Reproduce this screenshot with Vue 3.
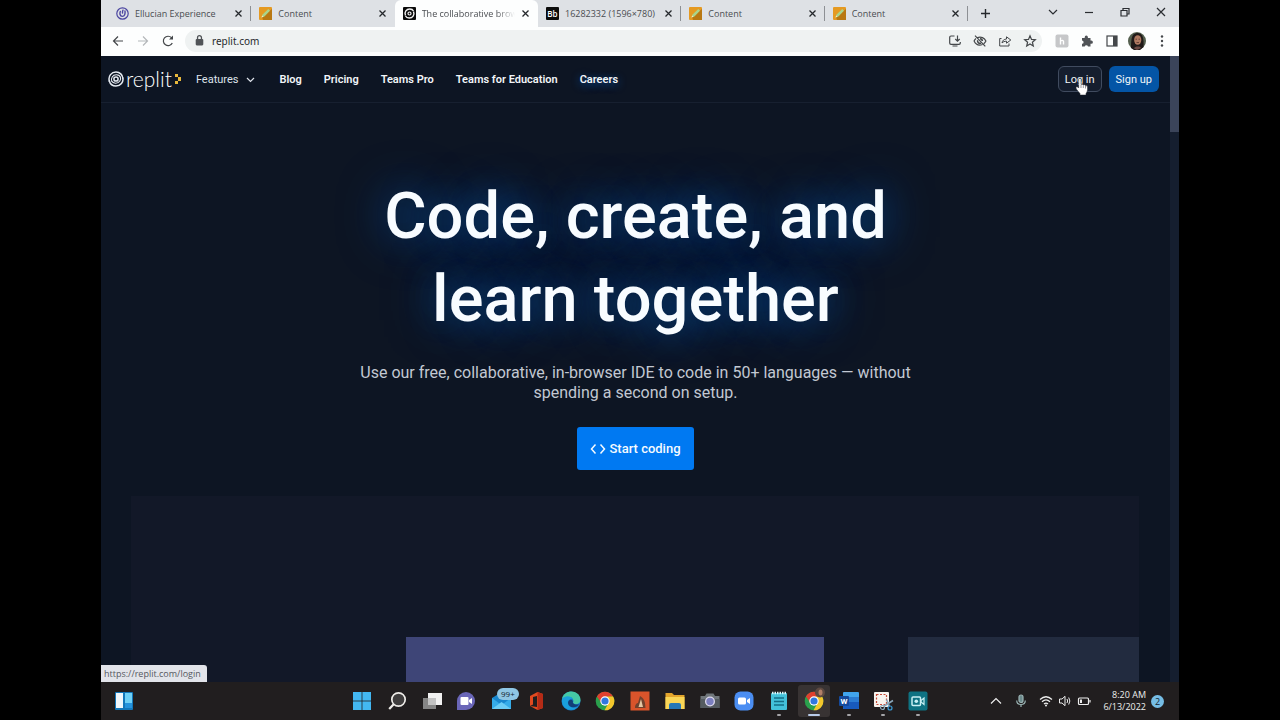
<script setup>
import { ref } from 'vue'

const address = ref('replit.com')

const tabs = [
  { title: 'Ellucian Experience', icon: 'ellucian' },
  { title: 'Content', icon: 'pencil' },
  { title: 'The collaborative brow', icon: 'replit', active: true },
  { title: '16282332 (1596×780)', icon: 'bb' },
  { title: 'Content', icon: 'pencil' },
  { title: 'Content', icon: 'pencil' },
]

const links = [
  { label: 'Blog' },
  { label: 'Pricing' },
  { label: 'Teams Pro' },
  { label: 'Teams for Education' },
  { label: 'Careers', glow: true },
]

const apps = [
  { name: 'Start' }, { name: 'Search' }, { name: 'Task view' }, { name: 'Chat' },
  { name: 'Mail', badge: '99+' }, { name: 'Office' }, { name: 'Edge' }, { name: 'Chrome' },
  { name: 'Paint' }, { name: 'File Explorer' }, { name: 'Camera' }, { name: 'Zoom' },
  { name: 'Notepad', open: true }, { name: 'Chrome window', open: true, active: true },
  { name: 'Word', open: true }, { name: 'Snipping Tool', open: true }, { name: 'Recorder', open: true },
]
</script>

<template>
  <div class="stage">
    <div class="desktop">
      <header class="tabstrip">
        <div class="tabs" role="tablist">
          <div v-for="(tab, i) in tabs" :key="i" class="tab" :class="{ active: tab.active, quiet: i === 1 || tab.active }" role="tab" :aria-selected="!!tab.active">
            <span v-if="tab.icon === 'bb'" class="favicon bb">Bb</span>
            <svg v-else class="favicon" viewBox="0 0 13 13" aria-hidden="true">
              <g v-if="tab.icon === 'ellucian'" fill="none" stroke="#4b45a0" stroke-linecap="round">
                <circle cx="6.500" cy="6.500" r="5.700" stroke-width="1.200" />
                <path d="M4.300 4.500C3.600 6 3.700 9.400 6.300 9.400C8.700 9.400 9.400 6.600 9 4M7 3.200C6.500 4 6.400 5 6.500 6" stroke-width="1.400" />
              </g>
              <g v-else-if="tab.icon === 'pencil'">
                <rect width="13" height="13" rx="1" fill="#e59a22" />
                <path d="M3 10L13 2V13H4Z" fill="#b97812" />
                <path d="M2.500 10.500L3.600 7.500L9.300 2L11 3.700L5.400 9.400Z" fill="#a9d48c" />
                <path d="M2.500 10.500L3.200 8.400L4.600 9.700Z" fill="#f5ecc8" />
              </g>
              <g v-else>
                <rect width="13" height="13" rx="1" fill="#0b0b0b" />
                <g fill="none" stroke="#f3f3f3">
                  <circle cx="6.500" cy="6.500" r="1.500" stroke-width="1.200" />
                  <path d="M2.500 8.500C1 5 3.500 2 6.800 2C8.500 2 10 3 10.500 4M10.500 4.500C12 8 9.500 11 6.200 11C4.500 11 3 10 2.500 9" stroke-width="1.400" />
                </g>
              </g>
            </svg>
            <span class="tab-title">{{ tab.title }}</span>
            <button class="close" aria-label="Close tab">
              <svg viewBox="0 0 9 9" width="9" height="9"><path d="M1.500 1.500L7.500 7.500M7.500 1.500L1.500 7.500" stroke="#25282c" stroke-width="1.300" /></svg>
            </button>
          </div>
        </div>
        <button class="new-tab" aria-label="New tab">
          <svg viewBox="0 0 11 11" width="11" height="11"><path d="M5.500 1V10M1 5.500H10" stroke="#25282c" stroke-width="1.400" /></svg>
        </button>
        <div class="window-controls">
          <button aria-label="Search tabs"><svg viewBox="0 0 12 12"><path d="M2 4L6 8L10 4" /></svg></button>
          <button aria-label="Minimize"><svg viewBox="0 0 12 12"><path d="M2 6.500H10" /></svg></button>
          <button aria-label="Restore"><svg viewBox="0 0 12 12"><path d="M2 4.500H8V10H2ZM4 4.500V2.500H10V8H8" /></svg></button>
          <button aria-label="Close"><svg viewBox="0 0 12 12"><path d="M2 2L10 10M10 2L2 10" /></svg></button>
        </div>
      </header>

      <div class="toolbar">
        <button class="tool" aria-label="Back"><svg viewBox="0 0 14 14"><path d="M12 7H2.500M7 2.500L2.500 7L7 11.500" /></svg></button>
        <button class="tool dim" aria-label="Forward"><svg viewBox="0 0 14 14"><path d="M2 7H11.500M7 2.500L11.500 7L7 11.500" /></svg></button>
        <button class="tool" aria-label="Reload"><svg viewBox="0 0 14 14"><path d="M11.300 9A4.700 4.700 0 1 1 10.500 3.700L11.500 4.800" /><path d="M12 1.500V5.500H8Z" fill="#44474a" stroke="none" /></svg></button>
        <div class="omnibox">
          <svg class="lock" viewBox="0 0 10 12"><rect x="1.500" y="4.500" width="7" height="6" rx="1" fill="#505357" /><path d="M3.200 5V3.300A1.800 1.800 0 0 1 6.800 3.300V5" fill="none" stroke="#505357" stroke-width="1.200" /></svg>
          <input v-model="address" type="text" aria-label="Address" class="address" />
          <button class="tool" aria-label="Install"><svg viewBox="0 0 14 14"><path d="M6.500 2H3Q1.700 2 1.700 3.300V9Q1.700 10.300 3 10.300H11Q12.300 10.300 12.300 9V8M4.500 12H9.500M9.500 1.500V7M7.300 5L9.500 7.200L11.700 5" /></svg></button>
          <button class="tool" aria-label="Third-party cookies blocked"><svg viewBox="0 0 14 14"><path d="M4.500 3.600C8 2.200 11.500 4 12.900 7C12.400 8.200 11.700 9 10.800 9.700M9.500 10.500C5.500 12 2.500 10 1.100 7C1.600 5.900 2.200 5.200 3 4.500M2 1.700L12.300 12.300" /><path d="M7 4.700A2.300 2.300 0 0 1 9.300 7M8 9A2.300 2.300 0 0 1 4.700 6.300" stroke-width="1.600" /></svg></button>
          <button class="tool" aria-label="Share"><svg viewBox="0 0 14 14"><path d="M3.500 4.500H1.700V12H11V9.500M4 9C4.300 6.500 6 5.200 8.500 5V2.800L12.800 6L8.500 9.200V7.200C6.500 7.200 5.200 7.700 4 9Z" stroke-width="1" /></svg></button>
          <button class="tool" aria-label="Bookmark"><svg viewBox="0 0 14 14"><path d="M7 1.800L8.500 5.400L12.300 5.700L9.400 8.200L10.300 12L7 10L3.700 12L4.600 8.200L1.700 5.700L5.500 5.400Z" /></svg></button>
        </div>
        <button class="tool" aria-label="Honey"><svg viewBox="0 0 14 14"><rect x="0.500" y="0.500" width="13" height="13" rx="2" fill="#c6c7c9" stroke="none" /><path d="M5.500 3.500V10.500M5.500 7Q8 5.500 8.500 7.500V10.500" stroke="#fff" stroke-width="1.400" /></svg></button>
        <button class="tool" aria-label="Extensions"><svg viewBox="0 0 14 14"><path d="M2 4H4.700V3.200A1.600 1.600 0 0 1 7.900 3.200V4H10.500V6.600H11.300A1.600 1.600 0 0 1 11.300 9.800H10.500V12.500H8A1.700 1.700 0 0 0 4.700 12.500H2V9.800A1.600 1.600 0 0 0 2 6.600Z" fill="#505357" stroke="none" /></svg></button>
        <button class="tool" aria-label="Side panel"><svg viewBox="0 0 14 14"><rect x="2" y="2" width="10" height="10" /><rect x="8" y="2" width="4" height="10" fill="#44474a" stroke="none" /></svg></button>
        <button class="tool" aria-label="Profile">
          <svg class="avatar" viewBox="0 0 18 18"><circle cx="9" cy="9" r="9" fill="#55604f" /><path d="M3 16C3 6 4 1 9.500 1S16 7 15.500 15L12 18H6Z" fill="#201a19" /><ellipse cx="9.700" cy="8" rx="3.600" ry="4.800" fill="#b07a62" /><path d="M6 16.500C7 14 12 14 13 16L9 18Z" fill="#6c4a45" /><path d="M7.500 7.200H9M10.500 7.200H12M8.500 10.500H11" stroke="#4a2a24" stroke-width="0.700" /></svg>
        </button>
        <button class="tool" aria-label="Menu"><svg viewBox="0 0 14 14"><g fill="#44474a" stroke="none"><circle cx="7" cy="2.500" r="1.200" /><circle cx="7" cy="7" r="1.200" /><circle cx="7" cy="11.500" r="1.200" /></g></svg></button>
      </div>

      <div class="viewport">
        <div class="page">
          <nav class="nav">
            <a href="#" class="logo" aria-label="replit">
              <svg viewBox="0 0 16 16" width="16" height="16" fill="none" stroke="#e6ebf2" stroke-linecap="round" aria-hidden="true">
                <circle cx="8" cy="8" r="2.100" stroke-width="1.500" />
                <path d="M1.300 10C0 5 3.500 1 8 1C12 1 14.500 4 14.800 7" stroke-width="1.500" />
                <path d="M14.800 7C15.800 11 12.500 15 8 15C4.500 15 2 12.500 1.300 10" stroke-width="1.500" />
                <path d="M3.800 10.500C2.600 7.500 4.500 3.700 8.500 3.800C10.500 3.900 12 5 12.500 6.500M12.200 5.500C13.500 8.500 11.500 12.300 7.500 12.200C5.500 12.100 4.200 11.200 3.700 10" stroke-width="1.100" />
              </svg>
              <span class="wordmark">replit</span>
              <svg viewBox="0 0 8 12" width="8" height="12" aria-hidden="true"><path d="M1 1H4V4H1ZM4 4H7V8H4ZM1 8H4V11H1Z" fill="#e9b93c" /></svg>
            </a>
            <button class="features">Features
              <svg viewBox="0 0 9 9" width="9" height="9"><path d="M1 3L4.500 6.500L8 3" fill="none" stroke="currentColor" stroke-width="1.200" /></svg>
            </button>
            <a v-for="link in links" :key="link.label" href="#" class="link" :class="{ glow: link.glow }">{{ link.label }}</a>
            <div class="account">
              <button class="btn login">Log in
                <svg class="cursor" viewBox="0 0 14 19" aria-hidden="true"><path d="M4 1.500Q5.500 0.500 6 2.300V7.500Q7.500 6.800 8.300 8Q9.800 7.300 10.500 8.700Q12.300 8.200 12.500 10V13Q12 15.500 11 16.500V18H5V16.500Q3.500 14.800 1.300 12Q0.500 10.300 1.700 9.800Q2.800 9.700 3.700 11V2.500Z" fill="#fff" stroke="#20242c" stroke-width="0.500" /><path d="M6 8V11M8.300 8.500V11M10.500 9V11.500" stroke="#4d525c" stroke-width="0.600" /></svg>
              </button>
              <button class="btn signup">Sign up</button>
            </div>
          </nav>

          <main class="hero">
            <h1>Code, create, and<br />learn together</h1>
            <p>Use our free, collaborative, in-browser IDE to code in 50+ languages — without spending a second on setup.</p>
            <button class="start">
              <svg viewBox="0 0 16 12" width="16" height="12"><path d="M5.500 1.500L1.500 6L5.500 10.500M10.500 1.500L14.500 6L10.500 10.500" fill="none" stroke="currentColor" stroke-width="1.500" /></svg>
              Start coding
            </button>
          </main>

          <section class="preview" aria-label="Preview">
            <div class="purple"></div>
            <div class="slate"></div>
          </section>
        </div>
        <div class="scrollbar"><div class="thumb"></div></div>
        <div class="status">https://replit.com/login</div>
      </div>

      <footer class="taskbar">
        <div class="widgets">
          <button class="app" aria-label="Widgets"><svg viewBox="0 0 20 20"><rect x="1" y="1" width="18" height="18" rx="1" fill="#1377b9" /><rect x="2" y="2" width="7" height="15" fill="#f1f8fc" /><rect x="11" y="2" width="7" height="10" fill="#6fd0f5" /><rect x="11" y="12" width="7" height="5" fill="#2593dc" /></svg></button>
        </div>
        <div class="apps">
          <button v-for="(app, i) in apps" :key="app.name" class="app" :class="{ open: app.open, active: app.active }" :aria-label="app.name">
            <svg viewBox="0 0 20 20">
              <g v-if="i === 0" fill="#43b8f2"><rect x="1" y="1" width="8.600" height="8.600" /><rect x="10.400" y="1" width="8.600" height="8.600" /><rect x="1" y="10.400" width="8.600" height="8.600" /><rect x="10.400" y="10.400" width="8.600" height="8.600" /></g>
              <g v-else-if="i === 1" stroke="#eeece8"><circle cx="11.500" cy="8.500" r="6.700" fill="#3f3d3d" stroke-width="1.700" /><path d="M6.700 13.300L2.200 18" stroke-width="2.300" /></g>
              <g v-else-if="i === 2"><rect x="1" y="7" width="13" height="11" fill="#858585" /><rect x="6" y="2" width="14" height="12" fill="#f1f1f1" /><rect x="6" y="7" width="8" height="7" fill="#c2c2c2" /></g>
              <g v-else-if="i === 3"><path d="M1 19V10A9 9 0 1 1 10 19Z" fill="#6a66b8" /><rect x="4.500" y="6" width="8" height="8" rx="1" fill="#fff" /><path d="M13 9L16 7V13L13 11Z" fill="#fff" /></g>
              <g v-else-if="i === 4"><path d="M1 7L10.500 1L20 7V18H1Z" fill="#1887ce" /><path d="M1 7L10.500 14L20 7V18H1Z" fill="#35ace9" /><path d="M1 18L10.500 11L20 18Z" fill="#6bcdf6" /></g>
              <g v-else-if="i === 5"><path d="M4 5L11.500 1L17 3V17L11.500 19L4 15L11 16V5L7 6V13.500L4 15Z" fill="#e24a20" /><path d="M11.500 1L17 3V17L11.500 19Z" fill="#b52b16" /></g>
              <g v-else-if="i === 6"><circle cx="10" cy="10" r="9.500" fill="#1678c8" /><path d="M1 8C2 3 6 0.500 10.500 0.500C16 0.500 20 5 19.500 9.500C19 13.500 13.500 14 12 12C13.500 9 11 6 8 6C4.500 6 2 7 1 8Z" fill="#45c9a5" /><path d="M1 8C4 4 10 4.500 12 8C10 7 6.500 9 7 12.500C7.500 16 12 18 17 16C10 22 0 18 1 8Z" fill="#1aa0dc" /><path d="M7 12C7 9.500 9 8 11 9C12.500 10 11.500 11.500 12 12C13.500 14 17 13.800 18.500 13C16 17 8 18 7 12Z" fill="#123f78" /></g>
              <g v-else-if="i === 7 || i === 13"><circle cx="10" cy="10" r="9.300" fill="#2aa04c" /><path d="M1.900 5.400A9.300 9.300 0 0 1 18.100 5.400L10 6L6.500 12Z" fill="#e0402f" /><path d="M18.100 5.400A9.300 9.300 0 0 1 9.500 19.300L13.600 12L12 5.400Z" fill="#f4c62b" /><circle cx="10" cy="10" r="4.700" fill="#fff" /><circle cx="10" cy="10" r="3.600" fill="#3177de" /><g v-if="i === 13"><circle cx="16" cy="1.500" r="5" fill="#5d4a42" /><ellipse cx="16.500" cy="1.500" rx="2" ry="3" fill="#b27f68" /></g></g>
              <g v-else-if="i === 8"><rect x="0.500" y="0.500" width="19" height="19" fill="#d9542b" /><path d="M5 17C5 13 7 12 8 12L10 5Q14 7 15 12L15.500 17Z" fill="#71412d" /><path d="M8.500 16L11 8L13 16Z" fill="#e5c8a4" /></g>
              <g v-else-if="i === 9"><path d="M0.500 2H7L9 4H19.500V18H0.500Z" fill="#e3a52c" /><path d="M0.500 6H19.500V18H0.500Z" fill="#f9d657" /><path d="M4 18V14Q4 12 6 12H14Q16 12 16 14V18Z" fill="#2578b8" /></g>
              <g v-else-if="i === 10"><path d="M0.500 5H5L6.500 2.500H13.500L15 5H19.500V17H0.500Z" fill="#70777b" /><rect x="0.500" y="8" width="19" height="9" fill="#555c61" /><circle cx="10" cy="10.500" r="5" fill="#dedbed" /><circle cx="10" cy="10.500" r="3.700" fill="#7b7fbf" /></g>
              <g v-else-if="i === 11"><rect x="0.500" y="0.500" width="19" height="19" rx="6" fill="#4b8ef2" /><rect x="4" y="6.500" width="8" height="7" rx="1.500" fill="#fff" /><path d="M13 9L16 7V13L13 11Z" fill="#fff" /></g>
              <g v-else-if="i === 12"><rect x="2" y="2" width="16" height="17" rx="1" fill="#43c1d9" /><path d="M3 2H17" stroke="#d9f4f8" stroke-width="2.500" stroke-dasharray="1.500 1" /><path d="M5 7H15M5 10.500H15M5 14H15" stroke="#146e85" stroke-width="1.400" /></g>
              <g v-else-if="i === 14"><rect x="4" y="1" width="16" height="17" rx="1" fill="#41a5ee" /><path d="M4 6H20V17Q20 18 19 18H5Q4 18 4 17Z" fill="#2b7cd3" /><path d="M4 11H20V17Q20 18 19 18H5Q4 18 4 17Z" fill="#185abd" /><rect y="5" width="10" height="10" rx="1" fill="#154a9c" /><text x="5" y="13" text-anchor="middle" class="word">W</text></g>
              <g v-else-if="i === 15"><rect x="1" y="1" width="15" height="15" rx="1" fill="#f8f4ef" /><rect x="3.500" y="3.500" width="10" height="10" fill="none" stroke="#c74b38" stroke-width="1.200" stroke-dasharray="2 1.500" /><path d="M20 9.500L10.500 15.500M13.500 8.500L16.500 15.500" stroke="#8aa7ba" stroke-width="1.600" /><circle cx="9.500" cy="16.500" r="2" fill="none" stroke="#8aa7ba" stroke-width="1.200" /><circle cx="17" cy="17" r="2" fill="none" stroke="#3b9ad4" stroke-width="1.200" /></g>
              <g v-else><rect x="0.500" y="0.500" width="19" height="19" rx="2" fill="#0e7282" /><rect x="4" y="6" width="8.500" height="8.500" rx="1" fill="none" stroke="#c9f0f4" stroke-width="1.500" /><circle cx="8.300" cy="10.200" r="1.800" fill="#c9f0f4" /><path d="M13 9.500L16 7V13.500L13 11Z" fill="none" stroke="#c9f0f4" stroke-width="1.200" /></g>
            </svg>
            <span v-if="app.badge" class="badge">{{ app.badge }}</span>
          </button>
        </div>
        <div class="tray">
          <button aria-label="Hidden icons"><svg viewBox="0 0 14 14"><path d="M2 9.500L7 4.500L12 9.500" /></svg></button>
          <button aria-label="Microphone" class="mic"><svg viewBox="0 0 14 14"><rect x="5" y="1" width="4" height="7.500" rx="2" fill="#6b8a8c" /><path d="M2.700 6.500Q2.700 10.500 7 10.500T11.300 6.500M7 10.500V13" /></svg></button>
          <button aria-label="Network and sound" class="quick">
            <svg viewBox="0 0 14 14"><path d="M1 5.500Q7 0 13 5.500M3 7.800Q7 4 11 7.800M5 10Q7 8.200 9 10" /><circle cx="7" cy="11.500" r="1" fill="#eee" stroke="none" /></svg>
            <svg viewBox="0 0 14 14"><path d="M1.500 5H4L7 2.300V11.700L4 9H1.500ZM9 5Q10.300 7 9 9M10.700 3.500Q13 7 10.700 10.500" stroke-width="1" /></svg>
            <svg viewBox="0 0 14 14"><rect x="1.500" y="4" width="10" height="6.500" rx="1" /><rect x="3" y="5.500" width="2" height="3.500" fill="#eee" stroke="none" /><path d="M13 6V8.500" /></svg>
          </button>
          <button class="clock"><span>8:20 AM</span><span>6/13/2022</span></button>
          <span class="count">2</span>
        </div>
      </footer>
    </div>
  </div>
</template>

<style>
body { background: #000; }
</style>

<style scoped>
* { box-sizing: border-box; }
button { border: 0; padding: 0; background: none; font: inherit; color: inherit; }
a { color: inherit; text-decoration: none; }

.stage {
  min-height: 100vh;
  display: flex;
  padding: 0 101px;
  background: #000;
  font-family: "Open Sans", "Noto Sans", sans-serif;
}
.desktop { flex: 1; min-width: 0; display: flex; flex-direction: column; overflow: hidden; }

.tabstrip { display: flex; height: 27px; background: #dee1e5; color: #4a4d51; font-size: 9px; padding-left: 7px; }
.tabs { display: flex; flex: 0 1 860px; min-width: 0; }
.tab { flex: 1; min-width: 0; display: flex; align-items: center; gap: 6px; padding: 0 8px; position: relative; }
.tab:not(.quiet)::after { content: ""; position: absolute; right: 0; top: 6px; height: 15px; width: 1px; background: #8d9094; }
.tab.active { background: #fdfefe; border-radius: 6px 6px 0 0; }
.favicon { width: 13px; height: 13px; flex: none; }
.bb { border-radius: 1px; background: #0b0b0b; color: #fff; font-size: 8px; line-height: 13px; font-weight: 600; text-align: center; }
.tab-title { flex: 1; min-width: 0; overflow: hidden; white-space: nowrap; }
.active .tab-title { mask-image: linear-gradient(90deg, #000 80%, transparent); }
.close { display: flex; flex: none; }
.new-tab { width: 34px; display: grid; place-items: center; }
.window-controls { margin-left: auto; display: flex; height: 24px; }
.window-controls button { width: 36px; display: grid; place-items: center; }
.window-controls svg { width: 12px; height: 12px; fill: none; stroke: #2a2d31; stroke-width: 1.2; }

.toolbar { display: flex; align-items: center; height: 29px; padding: 0 5px 2px 4px; background: #fdfefe; }
.tool { width: 25px; height: 22px; flex: none; display: grid; place-items: center; }
.tool svg { width: 14px; height: 14px; fill: none; stroke: #44474a; stroke-width: 1.2; }
.tool.dim svg { stroke: #b4b7ba; }
.tool .avatar { width: 18px; height: 18px; stroke: none; }
.omnibox { flex: 1; min-width: 0; display: flex; align-items: center; height: 22px; margin: 0 7px 0 5px; padding-left: 9px; border-radius: 11px; background: #eff2f2; }
.lock { width: 11px; height: 13px; flex: none; }
.address { flex: 1; min-width: 0; margin-left: 7px; padding: 0; border: 0; outline: 0; background: none; font: 10px "Noto Sans", "Open Sans", sans-serif; color: #26292d; }

.viewport { flex: 1; min-height: 0; display: flex; position: relative; background: #0d1523; font-family: Roboto, "Noto Sans", sans-serif; }
.page { flex: 1; min-width: 0; display: flex; flex-direction: column; }
.nav { display: flex; align-items: center; height: 47px; padding: 0 11px 0 7px; border-bottom: 1px solid #172030; color: #f2f5f9; font-size: 11px; white-space: nowrap; }
.logo { display: flex; align-items: center; gap: 2px; }
.wordmark { font: 300 21px/24px Lato, sans-serif; color: #fff; }
.features { display: flex; align-items: center; gap: 8px; margin-left: 14px; color: #dfe4ec; }
.link { margin-left: 22px; font-weight: 600; }
.features + .link { margin-left: 24px; }
.glow { text-shadow: 0 2px 8px rgba(0, 121, 242, 0.7); }
.account { margin-left: auto; display: flex; gap: 7px; }
.btn { position: relative; height: 26px; padding: 0 6px; border: 1px solid transparent; border-radius: 6px; }
.login { background: #151e2e; border-color: #404b5f; }
.signup { background: #0455a6; }
.cursor { position: absolute; left: 16px; top: 10px; width: 14px; height: 19px; }

.hero { display: flex; flex-direction: column; align-items: center; padding-top: 72px; text-align: center; }
h1 { margin: 0; color: #f8fcff; font-size: 65px; line-height: 83px; font-weight: 500; text-shadow: 0 0 48px rgba(0, 121, 242, 0.6), 0 0 36px rgba(0, 121, 242, 0.2); }
.hero p { max-width: 570px; margin: 22px 0 24px; color: #c2c8d2; font-size: 16px; line-height: 20px; }
.start { display: flex; align-items: center; justify-content: center; gap: 3px; height: 43px; padding: 0 13px; border-radius: 3px; background: #0079f2; color: #f5fbff; font-size: 13px; font-weight: 500; }

.preview { flex: 1; min-height: 0; display: grid; grid-template-columns: 418fr 231fr; column-gap: 84px; margin: 26px 31px 0 30px; padding: 141px 0 0 275px; background: #121828; }
.purple { background: #3e4577; }
.slate { background: #222b3f; }
.scrollbar { width: 9px; background: #151e2f; }
.thumb { height: 76px; background: #3b445a; }
.status { position: absolute; left: 0; bottom: 0; height: 17px; padding: 0 6px 0 3px; border-radius: 0 3px 0 0; background: #e2e4ea; color: #55585e; font: 9px/17px "Open Sans", sans-serif; }

.taskbar { display: grid; grid-template-columns: 1fr 578px 1fr; align-items: center; height: 38px; background: #211e1f; color: #eee; }
.widgets { padding-left: 12px; }
.apps { display: flex; justify-content: space-between; }
.app { position: relative; width: 22px; height: 38px; display: grid; place-items: center; }
.app svg { position: relative; width: 20px; height: 20px; overflow: visible; }
.app.open::after { content: ""; position: absolute; bottom: 4px; left: 9px; width: 4px; height: 2px; border-radius: 1px; background: #a5a5a8; }
.app.active::before { content: ""; position: absolute; inset: 3px -5px; border-radius: 3px; background: #383333; }
.app.active::after { left: 5px; width: 12px; background: #b9cbe8; }
.word { font: 700 8px Roboto, sans-serif; fill: #fff; }
.badge { position: absolute; left: 7px; top: 6px; padding: 0 4px; border-radius: 6px; background: #8fc6e4; color: #12222c; font-size: 8px; line-height: 12px; }
.tray { display: flex; align-items: center; justify-content: flex-end; padding-right: 15px; }
.tray svg { width: 14px; height: 14px; display: block; fill: none; stroke: #eee; stroke-width: 1.2; }
.mic { margin-left: 11px; }
.mic svg { stroke: #9cb5b5; }
.quick { display: flex; gap: 5px; margin-left: 11px; }
.clock { display: flex; flex-direction: column; align-items: flex-end; margin: 0 5px 0 12px; font-size: 9px; line-height: 12px; white-space: nowrap; }
.count { width: 13px; height: 13px; border-radius: 50%; background: #76bde5; color: #14232d; font-size: 9px; line-height: 13px; text-align: center; }
</style>
